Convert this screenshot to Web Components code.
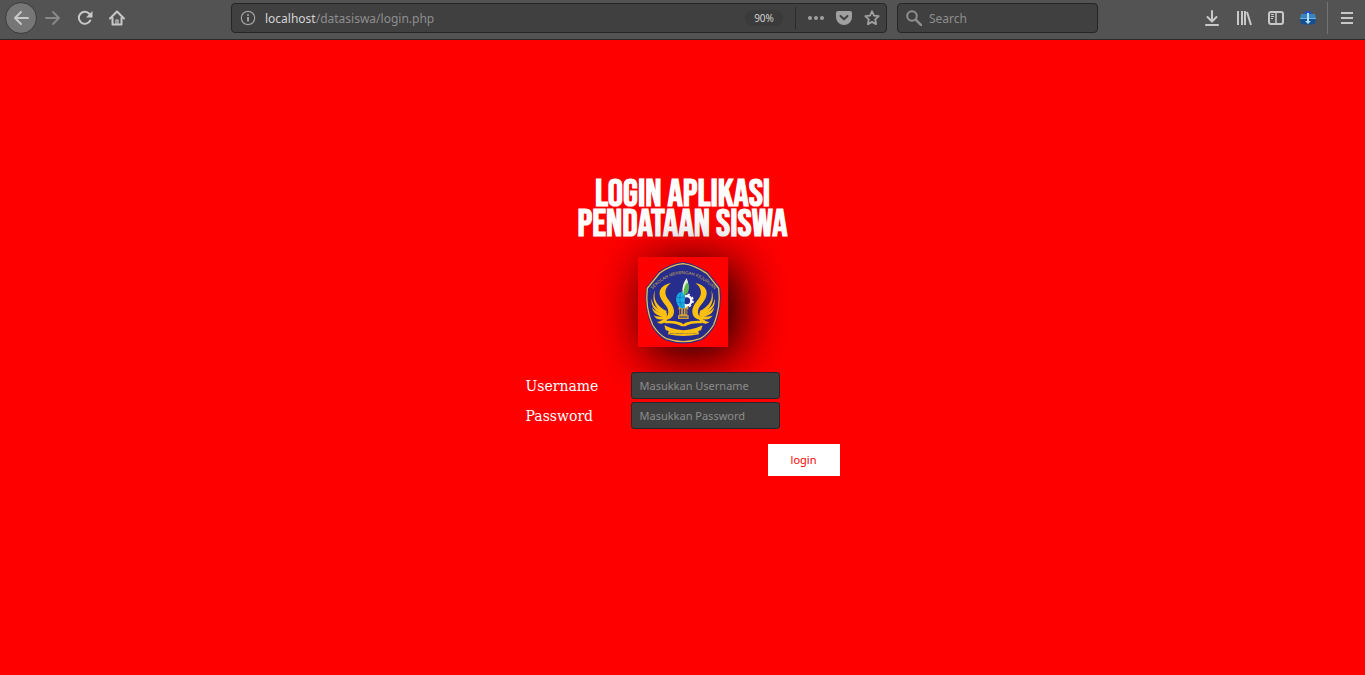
<!DOCTYPE html>
<html lang="id">
<head>
<meta charset="utf-8">
<title>Login Aplikasi Pendataan Siswa</title>
<style>
  body {
    margin: 0;
    min-height: 100vh;
    background: #f00;
    font-family: "Noto Sans", sans-serif;
  }
</style>
</head>
<body>
  <browser-toolbar></browser-toolbar>
  <login-page>
    <span slot="title">LOGIN APLIKASI<br>PENDATAAN SISWA</span>
    <school-emblem slot="logo"></school-emblem>
    <login-field label="Username" placeholder="Masukkan Username"></login-field>
    <login-field label="Password" placeholder="Masukkan Password" type="password"></login-field>
  </login-page>

<script>
const icons = {
  back: '<path d="M15 8H2M8 2L2 8l6 6"/>',
  forward: '<path d="M1 8h13M8 2l6 6-6 6"/>',
  reload: '<path d="M13.2 10.5A6 6 0 1 1 12.5 4"/><path d="M15.5 1v6.5H9z" fill="currentColor" stroke="none"/>',
  home: '<path d="M1 8.5L8 1.5l7 7M3.5 8v6.5h9V8"/><path d="M7 14v-4h2v4" stroke-width="1.2"/>',
  info: '<circle cx="8" cy="8" r="6.7" stroke-width="1.2"/><path d="M8 7v4.5" stroke-linecap="butt"/><circle cx="8" cy="5" r="1.1" fill="currentColor" stroke="none"/>',
  more: '<g fill="currentColor" stroke="none"><circle cx="2" cy="8" r="2"/><circle cx="8" cy="8" r="2"/><circle cx="14" cy="8" r="2"/></g>',
  pocket: '<path d="M2 1h12a2 2 0 0 1 2 2v4a8 8 0 0 1-16 0V3a2 2 0 0 1 2-2z" fill="currentColor" stroke="none"/><path d="M4.5 6L8 9.3 11.5 6" stroke="#404040"/>',
  star: '<path d="M8 1.3l2 4.3 4.7.6-3.5 3.2.9 4.8L8 11.900l-4.1 2.3.9-4.8L1.3 6.200 6 5.600z" stroke-width="1.8"/>',
  search: '<circle cx="6" cy="6" r="4.8"/><path d="M9.7 9.7l5.5 5.5" stroke-width="2.4"/>',
  download: '<path d="M8 1v10M3.5 7L8 11.5 12.5 7M2 15h12"/>',
  library: '<path d="M2 1v14M6 1v14M9 1v14M11 2l4 13" stroke-linecap="butt"/>',
  sidebar: '<rect x="1" y="2" width="14" height="12" rx="2"/><path d="M8 2v12" stroke-width="1.5"/><path d="M3 4.5h3M3 6.5h3M3 8.5h2" stroke-width="1" stroke-linecap="butt"/>',
  toolbox: `<g stroke="none"><path d="M4 5Q4 1 8 1t4 4z" fill="#2450c8"/>
    <path d="M1 4h14l1 5H0z" fill="#3b83bd"/><path d="M0 9h16l-1 5q-7 1-14 0z" fill="#164f91"/>
    <path d="M0 8h16v1H0z" fill="#6bb4df"/><path d="M7 3h2v8h2l-3 3-3-3h2z" fill="#b4e0fa"/></g>`,
  menu: '<path d="M2 3h12M2 8h12M2 13h12" stroke-linecap="butt"/>'
};

class ToolIcon extends HTMLElement {
  constructor() {
    super();
    this.attachShadow({ mode: 'open' });
  }

  static get styles() {
    return /* css */`
      :host { display: inline-flex; flex: none; }
      svg {
        width: 16px;
        height: 16px;
        fill: none;
        stroke: currentColor;
        stroke-width: 2;
        stroke-linecap: round;
        stroke-linejoin: round;
      }
    `;
  }

  connectedCallback() {
    this.shadowRoot.innerHTML = `<style>${ToolIcon.styles}</style>
      <svg viewBox="0 0 16 16" aria-hidden="true">${icons[this.getAttribute('name')]}</svg>`;
  }
}

class BrowserToolbar extends HTMLElement {
  constructor() {
    super();
    this.attachShadow({ mode: 'open' });
  }

  static get styles() {
    return /* css */`
      :host {
        display: flex;
        box-sizing: border-box;
        height: 40px;
        padding: 0 2px 3px 5px;
        align-items: center;
        background: #535353;
        border-bottom: 1px solid #2b2b2b;
        color: #c8c8c8;
        font-size: 12px;
      }
      .tools { display: flex; flex: none; align-items: center; }
      button {
        display: flex;
        box-sizing: border-box;
        width: 32px;
        height: 32px;
        padding: 0;
        border: 0;
        background: none;
        color: inherit;
        font: inherit;
        align-items: center;
        justify-content: center;
      }
      .back { background: #767676; border: 1px solid #3a3a3a; border-radius: 50%; }
      .forward { color: #888; }
      .spacer { flex: 1 1 98px; }
      .box {
        display: flex;
        box-sizing: border-box;
        height: 30px;
        min-width: 0;
        padding: 0 8px;
        align-items: center;
        gap: 9px;
        background: #404040;
        border: 1px solid #262626;
        border-radius: 4px;
        color: #a0a0a0;
      }
      .url { flex: 6 1 656px; padding-right: 0; }
      .address { flex: 1; color: #8e8e8e; outline: 0; white-space: nowrap; }
      .address b { color: #d4d4d4; font-weight: normal; }
      .zoom { width: 38px; height: 16px; border-radius: 8px; background: #3b3b3b; color: #d0d0d0; font-size: 10px; }
      .line { width: 1px; height: 22px; background: #2a2a2a; margin: 0 -3px 0 3px; }
      .actions { display: flex; }
      .actions button { width: 28px; }
      .search { flex: 2 1 201px; margin-left: 10px; color: #8e8e8e; gap: 7px; }
      input { flex: 1; min-width: 0; padding: 0; border: 0; outline: 0; background: none; font: inherit; color: inherit; }
      input::placeholder { color: #8e8e8e; opacity: 1; }
      .divider { width: 1px; height: 32px; margin: 0 3px; background: #747474; }
    `;
  }

  connectedCallback() {
    this.shadowRoot.innerHTML = /* html */`
      <style>${BrowserToolbar.styles}</style>
      <div class="tools">
        <button class="back" aria-label="Back"><tool-icon name="back"></tool-icon></button>
        <button class="forward" aria-label="Forward"><tool-icon name="forward"></tool-icon></button>
        <button aria-label="Reload"><tool-icon name="reload"></tool-icon></button>
        <button aria-label="Home"><tool-icon name="home"></tool-icon></button>
      </div>
      <div class="spacer"></div>
      <div class="box url">
        <tool-icon name="info"></tool-icon>
        <div class="address" role="textbox" contenteditable="true" spellcheck="false" aria-label="Address"><b>localhost</b>/datasiswa/login.php</div>
        <button class="zoom">90%</button>
        <div class="line"></div>
        <div class="actions">
          <button aria-label="Page actions"><tool-icon name="more"></tool-icon></button>
          <button aria-label="Save to Pocket"><tool-icon name="pocket"></tool-icon></button>
          <button aria-label="Bookmark"><tool-icon name="star"></tool-icon></button>
        </div>
      </div>
      <label class="box search">
        <tool-icon name="search"></tool-icon>
        <input type="text" placeholder="Search" aria-label="Search">
      </label>
      <div class="spacer"></div>
      <div class="tools">
        <button aria-label="Downloads"><tool-icon name="download"></tool-icon></button>
        <button aria-label="Library"><tool-icon name="library"></tool-icon></button>
        <button aria-label="Sidebars"><tool-icon name="sidebar"></tool-icon></button>
        <button aria-label="Toolbox"><tool-icon name="toolbox"></tool-icon></button>
        <div class="divider"></div>
        <button aria-label="Menu"><tool-icon name="menu"></tool-icon></button>
      </div>
    `;
  }
}

class SchoolEmblem extends HTMLElement {
  constructor() {
    super();
    this.attachShadow({ mode: 'open' });
  }

  static get styles() {
    return /* css */`
      :host {
        display: block;
        position: relative;
        width: 90px;
        height: 90px;
        background: #f00;
        box-shadow: 9px 8px 50px #000;
      }
      svg { display: block; width: 100%; height: 100%; }
      text { font-family: "Liberation Sans", sans-serif; text-anchor: middle; }
    `;
  }

  connectedCallback() {
    this.shadowRoot.innerHTML = /* html */`
      <style>${SchoolEmblem.styles}</style>
      <svg viewBox="0 0 270 270" role="img" aria-label="Logo sekolah">
        <defs>
          <path id="arc" d="M42 98Q134 4 230 98"/>
          <g id="wing">
            <path d="M99 78C66 84 58 106 70 127C78 142 92 151 91 166C91 176 84 183 74 185C94 193 108 181 108 163C108 143 88 129 83 113C80 99 86 87 99 78z"/>
            <path d="M51 99C45 128 56 148 86 162L83 170C53 158 38 130 51 99z"/>
            <path d="M41 123C42 144 56 158 86 166L82 174C55 169 36 149 41 123z"/>
            <path d="M42 151C50 165 66 168 88 169L84 178C63 181 45 170 42 151z"/>
            <path d="M47 175C58 182 72 177 88 173L85 183C69 192 53 188 47 175z"/>
            <path d="M57 194C68 195 74 186 90 179L88 188C77 201 66 204 57 194z"/>
          </g>
        </defs>
        <path d="M135 15Q170 19 210 46L247 92Q254 149 231 206Q213 236 190 250Q136 269 82 250Q57 236 40 206Q17 151 24 92L62 44Q98 19 135 15z" fill="#272d8d"/>
        <path d="M135 20Q170 24 207 50L242 94Q249 149 227 204Q209 232 187 245Q136 263 85 245Q61 232 44 204Q21 151 28 94L65 48Q99 24 135 20z" fill="none" stroke="#e4bd4e" stroke-width="4"/>
        <text font-size="13" fill="#c9a94a"><textPath href="#arc" startOffset="50%">SEKOLAH MENENGAH KEJURUAN</textPath></text>
        <g fill="#fdc011">
          <use href="#wing"/>
          <use href="#wing" transform="matrix(-1 0 0 1 271 0)"/>
          <path d="M76 192Q110 189 130 197L136 202L142 197Q163 189 196 192L191 199Q160 196 142 208H130Q111 196 81 199z"/>
          <path d="M79 205L99 213Q136 226 174 213L194 205L189 220L181 222L183 232Q136 242 90 232L92 222L83 219z"/>
        </g>
        <text x="136" y="232" font-size="7" fill="#272d8d">SMK NEGERI 1 JAKARTA</text>
        <path d="M123 147h28v10h-3v18h4v11h-32v-11h4v-18h-3z" fill="#d5a334"/>
        <path d="M128 155v17M136 155v17M144 155v17M124 180h24" stroke="#272d8d" stroke-width="3"/>
        <circle cx="146" cy="131" r="14" fill="none" stroke="#fff" stroke-width="7"/>
        <circle cx="146" cy="131" r="19" fill="none" stroke="#fff" stroke-width="5" stroke-dasharray="7 8"/>
        <path d="M144 103C119 101 111 119 116 137C121 152 133 156 141 153C140 139 140 120 144 103z" fill="#15aee4"/>
        <path d="M114 120q12 4 27 0M115 135q12 5 25 2M129 105q-9 22 4 48" fill="none" stroke="#196ab7" stroke-width="2"/>
        <path d="M146 63Q157 88 145 109Q139 117 134 105Q130 86 146 63z" fill="#e4f2dc"/>
        <path d="M147 76Q158 90 149 107L137 116Q134 97 147 76z" fill="#5cb44c"/>
      </svg>
    `;
  }
}

class LoginField extends HTMLElement {
  constructor() {
    super();
    this.attachShadow({ mode: 'open' });
  }

  static get styles() {
    return /* css */`
      :host {
        display: grid;
        grid-template-columns: 105px 149px;
        align-items: center;
      }
      label {
        color: #fff;
        font: 14px/20px "DejaVu Serif", serif;
      }
      input {
        box-sizing: border-box;
        width: 100%;
        height: 27px;
        padding: 0 8px;
        background: #404040;
        border: 1px solid #272727;
        border-radius: 3px;
        color: #ddd;
        font: 11px "Noto Sans", sans-serif;
      }
      input::placeholder { color: #8c8c8c; opacity: 1; }
    `;
  }

  connectedCallback() {
    this.shadowRoot.innerHTML = /* html */`
      <style>${LoginField.styles}</style>
      <label for="field"></label>
      <input id="field">
    `;
    const input = this.shadowRoot.querySelector('input');
    this.shadowRoot.querySelector('label').textContent = this.getAttribute('label');
    input.type = this.getAttribute('type') || 'text';
    input.placeholder = this.getAttribute('placeholder');
  }
}

class LoginPage extends HTMLElement {
  constructor() {
    super();
    this.attachShadow({ mode: 'open' });
  }

  static get styles() {
    return /* css */`
      :host {
        display: flex;
        flex-direction: column;
        align-items: center;
        padding: 140px 16px 32px;
      }
      h1 {
        margin: 0 0 17px;
        color: #fff;
        font: bold 38px/30px "Bebas Neue", "Roboto Condensed", Roboto, sans-serif;
        text-align: center;
      }
      form {
        display: flex;
        flex-direction: column;
        width: 314px;
        max-width: 100%;
        margin-top: 25px;
        gap: 3px;
        position: relative;
      }
      button {
        align-self: flex-end;
        width: 72px;
        height: 32px;
        margin-top: 12px;
        padding: 0 0 2px;
        border: 0;
        background: #fff;
        color: #f00;
        font: 11px "Noto Sans", sans-serif;
      }
    `;
  }

  connectedCallback() {
    this.shadowRoot.innerHTML = /* html */`
      <style>${LoginPage.styles}</style>
      <h1><slot name="title"></slot></h1>
      <slot name="logo"></slot>
      <form>
        <slot></slot>
        <button type="submit">login</button>
      </form>
    `;
  }
}

customElements.define('tool-icon', ToolIcon);
customElements.define('browser-toolbar', BrowserToolbar);
customElements.define('school-emblem', SchoolEmblem);
customElements.define('login-field', LoginField);
customElements.define('login-page', LoginPage);
</script>
</body>
</html>
